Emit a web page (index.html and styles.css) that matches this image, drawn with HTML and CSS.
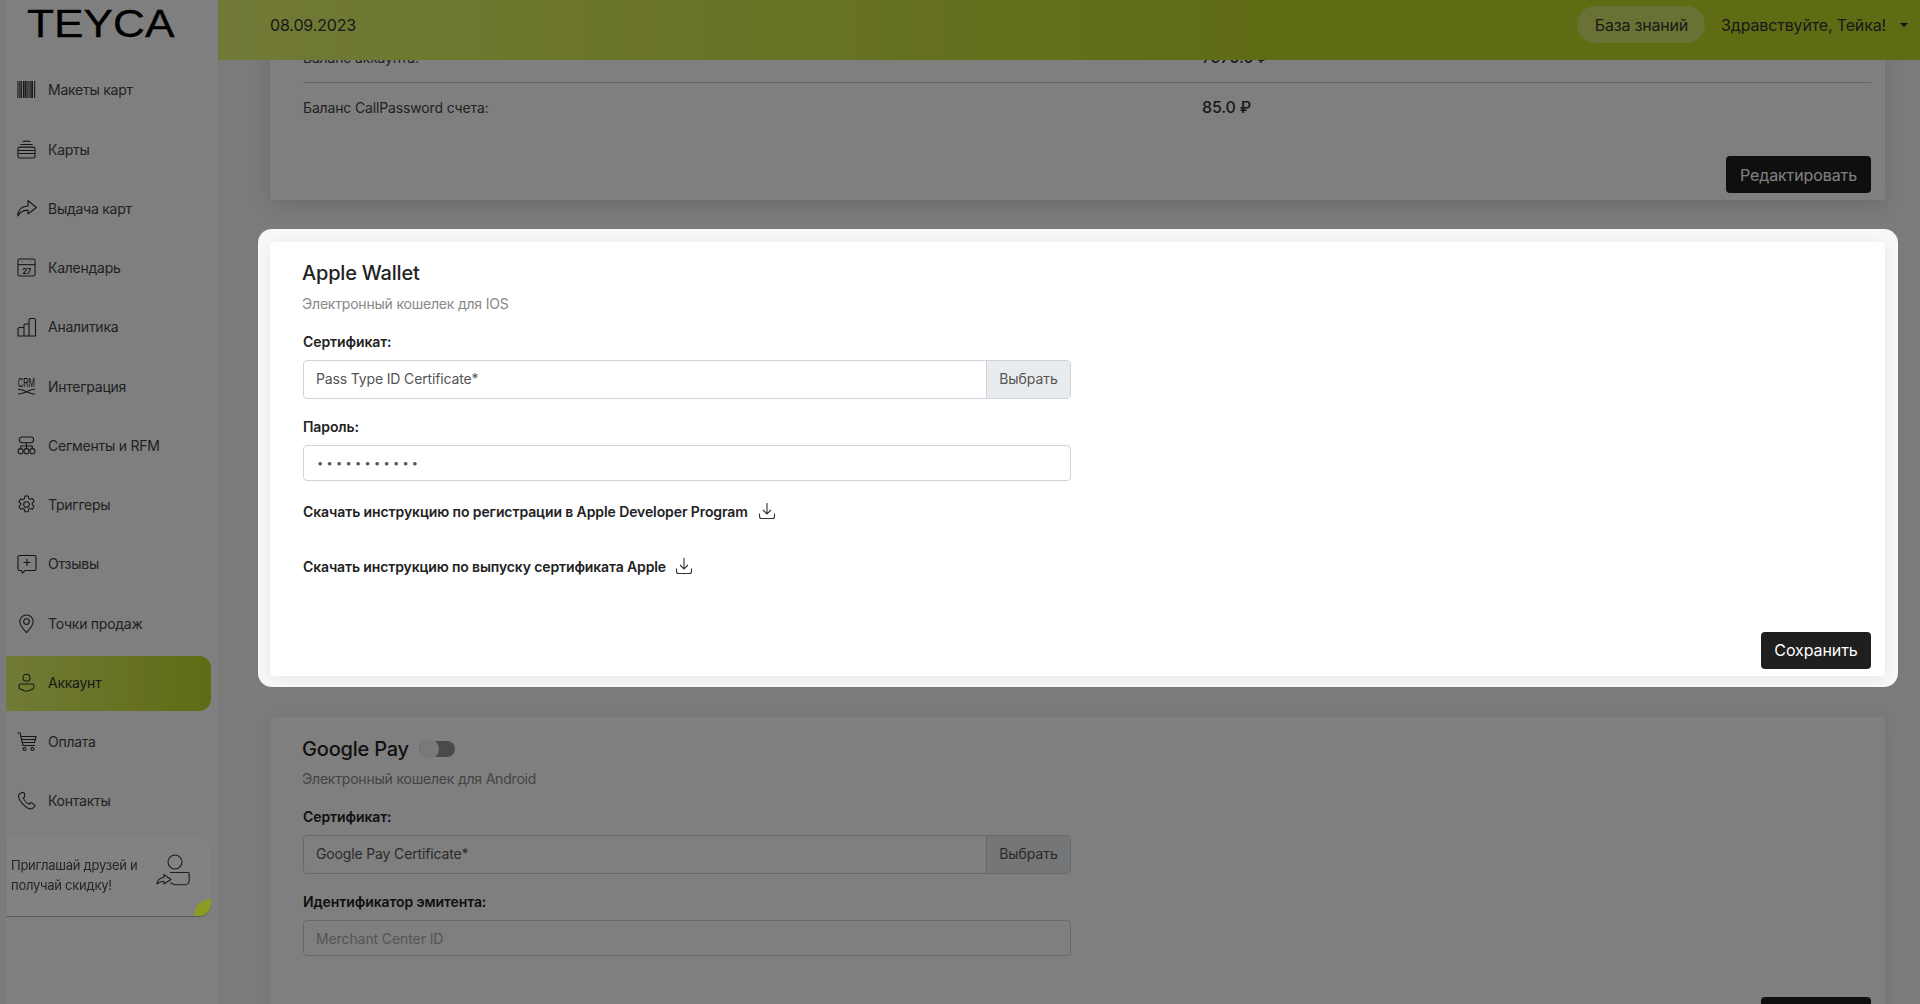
FILE: index.html
```html
<!DOCTYPE html>
<html lang="ru">
<head>
<meta charset="utf-8">
<title>Teyca — Аккаунт</title>
<link rel="stylesheet" href="styles.css">
</head>
<body>
<div class="app">
  <aside class="sidebar">
    <div class="logo"><span class="logo-text">TEYCA</span></div>
    <nav class="nav">
      <a class="nav-item"><svg class="ico" viewBox="0 0 20 20"><path d="M1 1v18M3 1v18M4.600 1v18M6.800 1v18M9 1v18M10.600 1v18M12.600 1v18M14.600 1v18M16.200 1v18M18.600 1v18" stroke-width="1.100"/><path d="M7.800 1v18M15.400 1v18" stroke-width=".6"/></svg>Макеты карт</a>
      <a class="nav-item"><svg class="ico" viewBox="0 0 20 20"><rect x="1" y="7.500" width="18" height="11.500" rx="2"/><path d="M1 11h18M1 14.200h18M3.500 4.800h13M6 1.800c1-.8 7-.8 8 0"/></svg>Карты</a>
      <a class="nav-item"><svg class="ico ico-wide" viewBox="0 0 20 20"><path d="M.8 18C.8 12 4 8.200 11 8V2.500l8.300 7-8.300 6.500v-3.600C6 12 3 14 .8 18z" stroke-linejoin="round"/></svg>Выдача карт</a>
      <a class="nav-item"><svg class="ico" viewBox="0 0 20 20"><rect x="1" y="1" width="18" height="18" rx="2"/><path d="M1 7h18"/><path d="M5.500 3.600v.6M14 3.600v.6"/><text class="cal-num" x="10" y="16.600" text-anchor="middle">27</text></svg>Календарь</a>
      <a class="nav-item"><svg class="ico ico-wide" viewBox="0 0 20 20"><path d="M1 19v-7a1.500 1.500 0 0 1 1.500-1.500H7V8.500A1.500 1.500 0 0 1 8.500 7H12V3a1.500 1.500 0 0 1 1.500-1.500h3.500A1.500 1.500 0 0 1 18.500 3v16zM7 10.500V19M12 7v12"/></svg>Аналитика</a>
      <a class="nav-item"><svg class="ico" viewBox="0 0 20 20"><text class="crm" transform="translate(.8 11) scale(.6 1)">CRM</text><path d="M1 13c6 0 12 5 18 5M19 13c-6 0-12 5-18 5"/></svg>Интеграция</a>
      <a class="nav-item"><svg class="ico" viewBox="0 0 20 20"><rect x="2.500" y="1" width="15" height="6" rx="3"/><path d="M10 7v6M4 13v-2.500h12V13"/><circle cx="3.800" cy="16" r="2.700"/><circle cx="10" cy="16" r="2.700"/><circle cx="16.200" cy="16" r="2.700"/></svg>Сегменты и RFM</a>
      <a class="nav-item"><svg class="ico" viewBox="0 0 20 20"><circle cx="10" cy="10" r="3"/><path d="M8.300 1h3.400l.6 2.600 1.500.9 2.500-.8 1.700 3-2 1.800v1.600l2 1.800-1.700 3-2.500-.8-1.500.9-.6 2.600H8.300l-.6-2.600-1.500-.9-2.500.8-1.700-3 2-1.800V8.900L2 7.100l1.700-3 2.500.8 1.500-.9z" stroke-linejoin="round"/></svg>Триггеры</a>
      <a class="nav-item"><svg class="ico ico-wide" viewBox="0 0 20 20"><path d="M2.500 1.500h15A1.500 1.500 0 0 1 19 3v12a1.500 1.500 0 0 1-1.500 1.500H8L5.500 19 4.500 16.500h-2A1.500 1.500 0 0 1 1 15V3a1.500 1.500 0 0 1 1.500-1.500z"/><path d="M10 5v7M6.500 8.500h7"/></svg>Отзывы</a>
      <a class="nav-item"><svg class="ico" viewBox="0 0 20 20"><path d="M10 19.500C6 15.500 3 12 3 8a7 7 0 0 1 14 0c0 4-3 7.500-7 11.500z"/><circle cx="10" cy="8" r="3"/></svg>Точки продаж</a>
      <a class="nav-item active"><svg class="ico" viewBox="0 0 20 20"><circle cx="10" cy="5" r="3.700"/><path d="M3.500 11.500h13c.8 0 1.300.5 1.300 1.300v2.500c0 .5-.2.900-.7 1.200L12 19H8l-5.100-2.500c-.5-.3-.7-.7-.7-1.200v-2.500c0-.8.500-1.300 1.300-1.300z"/></svg>Аккаунт</a>
      <a class="nav-item"><svg class="ico ico-wide" viewBox="0 0 20 20"><path d="M.5 1h2.500l3 12.500h12M3.800 4.500H19l-1.500 6H5.300M4.500 7.500h14"/><circle cx="7.500" cy="17" r="1.500"/><circle cx="15.500" cy="17" r="1.500"/></svg>Оплата</a>
      <a class="nav-item"><svg class="ico" viewBox="0 0 20 20"><path d="M5.500 1.500L2.500 3C1 5 2 9 5.500 13s8 6.500 10.500 5.500l2.500-2c.500-.5.500-1.200 0-1.700l-3-2.300c-.5-.4-1.200-.3-1.600.2l-.9 1.200c-2.500-.8-5.500-4-6.300-6.600l1.200-1c.5-.4.500-1.100.2-1.600L7.500 1.900c-.5-.6-1.300-.7-2-.4z"/></svg>Контакты</a>
    </nav>
    <div class="promo">
      <p class="promo-text">Приглашай друзей и получай скидку!</p>
      <svg class="promo-ico" viewBox="0 0 34 34"><circle cx="19" cy="8" r="7"/><path d="M14 18.500h18c.8 0 1.200.4 1.200 1.200v7c0 2-1.500 4-4 4H20c-1.500 0-4-1-5.500-2"/><path d="M.8 30c.7-4 3-6.200 7-6.500v-3l7.200 5-7.200 4.500v-2.800c-3 0-5 1-7 2.800z" stroke-linejoin="round"/></svg>
      <span class="promo-corner"></span>
    </div>
  </aside>
  <main class="main">
    <header class="topbar">
      <span class="date">08.09.2023</span>
      <div class="topbar-right">
        <a class="kb">База знаний</a>
        <a class="user">Здравствуйте, Тейка!<span class="caret"></span></a>
      </div>
    </header>
    <div class="content">
      <section class="card card-balance">
        <div class="row row-line"><span>Баланс аккаунта:</span><span class="val">7970.0 ₽</span></div>
        <div class="row row-last"><span>Баланс CallPassword счета:</span><span class="val">85.0 ₽</span></div>
        <div class="actions actions-balance"><button class="btn btn-wide">Редактировать</button></div>
      </section>
      <div class="spotlight">
        <section class="card card-form">
          <h2 class="title">Apple Wallet</h2>
          <p class="sub">Электронный кошелек для IOS</p>
          <label class="label">Сертификат:</label>
          <div class="file"><span class="file-name">Pass Type ID Certificate*</span><span class="file-btn">Выбрать</span></div>
          <label class="label label-2">Пароль:</label>
          <input class="input input-pass" type="password" value="12345678901" aria-label="Пароль">
          <a class="dl dl-1">Скачать инструкцию по регистрации в Apple Developer Program<svg class="dl-ico" viewBox="0 0 18 18"><path d="M9 1v10.500M5 8l4 4 4-4M1.500 11.500v3a2 2 0 0 0 2 2h11a2 2 0 0 0 2-2v-3"/></svg></a>
          <a class="dl dl-2">Скачать инструкцию по выпуску сертификата Apple<svg class="dl-ico" viewBox="0 0 18 18"><path d="M9 1v10.500M5 8l4 4 4-4M1.500 11.500v3a2 2 0 0 0 2 2h11a2 2 0 0 0 2-2v-3"/></svg></a>
          <div class="actions actions-form"><button class="btn btn-save">Сохранить</button></div>
        </section>
      </div>
      <section class="card card-form card-google">
        <h2 class="title">Google Pay<span class="toggle"><span class="knob"></span></span></h2>
        <p class="sub">Электронный кошелек для Android</p>
        <label class="label">Сертификат:</label>
        <div class="file"><span class="file-name">Google Pay Certificate*</span><span class="file-btn">Выбрать</span></div>
        <label class="label label-2">Идентификатор эмитента:</label>
        <input class="input" type="text" placeholder="Merchant Center ID" aria-label="Идентификатор эмитента">
        <div class="actions actions-google"><button class="btn btn-save">Сохранить</button></div>
      </section>
    </div>
  </main>
</div>
<div class="overlay"></div>
</body>
</html>
```
FILE: styles.css
```css
* { box-sizing: border-box; }
html, body { margin: 0; height: 100%; overflow: hidden; }
body {
  font-family: Inter, "Noto Sans", sans-serif;
  font-size: 14px;
  color: #222;
  background: #f6f6f6;
}
.app { display: flex; height: 1004px; padding-left: 6px; }

/* sidebar */
.sidebar { width: 212px; flex: none; background: #fff; display: flex; flex-direction: column; }
.logo { height: 63px; padding: 0 0 0 21px; }
.logo-text {
  display: inline-block;
  font-family: "Liberation Sans", sans-serif;
  font-size: 38px;
  line-height: 49px;
  color: #000;
  transform: scaleX(1.165);
  transform-origin: left center;
  -webkit-text-stroke: .3px #000;
}
.nav { display: flex; flex-direction: column; gap: 4.280px; width: 205px; }
.nav-item {
  height: 55px;
  display: flex;
  align-items: center;
  gap: 12px;
  padding: 0 0 1.500px 11px;
  font-size: 14px;
  letter-spacing: -.25px;
  color: #444;
}
.nav-item.active {
  background: linear-gradient(90deg, #e4f56e, #c0d828);
  border-radius: 0 12px 12px 0;
  color: #333;
}
.ico {
  width: 19px;
  height: 19px;
  flex: none;
  fill: none;
  stroke: #2a2a2a;
  stroke-width: 1.100;
}
.ico-wide { width: 20px; height: 20px; margin-left: -.5px; margin-right: -.5px; }
.cal-num { font: 700 8px Inter, sans-serif; fill: #333; stroke: none; }
.crm { font: 13.500px "Liberation Sans", sans-serif; fill: #222; stroke: none; }
.promo {
  position: relative;
  z-index: 20;
  margin-top: 7.500px;
  width: 205px;
  height: 79px;
  padding: 0 0 2px 5px;
  display: flex;
  align-items: center;
  justify-content: space-between;
  background: #828282;
  border-radius: 0 12px 12px 0;
  box-shadow: 0 1px 1px rgba(0,0,0,.3);
  overflow: hidden;
}
.promo-text { margin: 0; width: 132px; font-size: 13px; line-height: 20px; letter-spacing: -.25px; color: #262626; }
.promo-ico { width: 34px; height: 34px; margin-right: 21px; margin-top: -8px; fill: none; stroke: #1c1c1c; stroke-width: 1.100; }
.promo-corner {
  position: absolute;
  right: 0;
  bottom: 0;
  width: 17px;
  height: 17px;
  background: #8c9c22;
  border-radius: 17px 0 0 0;
}

/* main */
.main { flex: 1; min-width: 0; display: flex; flex-direction: column; height: 1004px; overflow: hidden; }
.topbar {
  position: relative;
  z-index: 5;
  flex: none;
  height: 60px;
  display: flex;
  align-items: center;
  justify-content: space-between;
  padding: 0 12px 11px 52px;
  background: linear-gradient(90deg, #e4f56e, #c0d828 62%);
  font-size: 16px;
  color: #333;
}
.date { letter-spacing: -.15px; }
.topbar-right { display: flex; align-items: center; }
.kb {
  height: 37px;
  padding: 0 17px 0 18px;
  display: flex;
  align-items: center;
  border-radius: 19px;
  letter-spacing: -.2px;
  background: rgba(255,255,255,.3);
}
.user { display: flex; align-items: center; margin-left: 16px; letter-spacing: -.15px; }
.caret {
  margin-left: 14px;
  border-top: 4px solid #222;
  border-left: 4px solid transparent;
  border-right: 4px solid transparent;
}
.content { flex: 1; padding: 0 35px 0 52px; display: flex; flex-direction: column; gap: 41.500px; }
.card {
  flex: none;
  background: #fff;
  border-radius: 4px;
  padding: 0 14px 0 33px;
  box-shadow: 0 2px 16px rgba(0,0,0,.07);
}
.card-balance { margin-top: -28px; height: 168px; box-shadow: 0 6px 22px rgba(0,0,0,.12); }
.row { height: 51px; display: grid; grid-template-columns: 899px 1fr; align-items: center; color: #444; letter-spacing: -.15px; }
.row-line { border-bottom: 1px solid #c9c9c9; }
.row-last { height: 48px; }
.val { font-size: 16px; font-weight: 500; color: #333; }
.actions { display: flex; justify-content: flex-end; }
.actions-balance { margin-top: 25px; }
.btn {
  height: 37px;
  border: 0;
  border-radius: 4px;
  background: #1f1f1f;
  color: #fff;
  font: 16px Inter, sans-serif;
  letter-spacing: -.1px;
}
.btn-wide { width: 145px; }
.btn-save { width: 110px; }

.spotlight {
  position: relative;
  z-index: 20;
  margin: -13px -13px -11px -12px;
  padding: 13px 13px 11px 12px;
  background: #f8f8f8;
  border-radius: 14px;
}
.card-form { padding-top: 19.500px; height: 434px; }
.title {
  margin: 0 0 0 -1px;
  display: flex;
  align-items: center;
  height: 24px;
  font-size: 20px;
  font-weight: 500;
  letter-spacing: -.2px;
  color: #222;
}
.sub { margin: 9.500px 0 0 -1px; height: 18px; line-height: 18px; font-size: 14px; letter-spacing: -.2px; color: #888; }
.label { display: block; margin-top: 20px; height: 18px; line-height: 18px; font-size: 14px; font-weight: 600; letter-spacing: -.1px; color: #222; }
.label-2 { margin-top: 19px; }
.file {
  margin-top: 9px;
  display: flex;
  height: 39px;
  width: 768px;
  border: 1px solid #ced4da;
  border-radius: 4px;
  overflow: hidden;
}
.file-name { flex: 1; padding: 0 12px; line-height: 35px; color: #555; letter-spacing: -.15px; }
.file-btn { width: 84px; padding-bottom: 2px; display: flex; align-items: center; justify-content: center; background: #e9ecef; border-left: 1px solid #ced4da; color: #555; letter-spacing: -.05px; }
.input {
  display: block;
  margin-top: 9px;
  width: 768px;
  height: 36px;
  padding: 0 12px;
  border: 1px solid #ced4da;
  border-radius: 4px;
  background: #fff;
  font: 14px Inter, sans-serif;
  color: #555;
  outline: 0;
}
.input-pass { font-size: 11px; letter-spacing: 3.300px; padding-left: 13px; }
.input::placeholder { color: #aaa; letter-spacing: -.1px; }
.dl { display: flex; align-items: center; font-weight: 600; font-size: 14px; letter-spacing: -.1px; color: #222; height: 20px; }
.dl-1 { margin-top: 20.500px; }
.dl-2 { margin-top: 35px; letter-spacing: -.13px; }
.dl-2 .dl-ico { margin-left: 9px; }
.dl-ico { width: 18px; height: 18px; margin-left: 10px; fill: none; stroke: #333; stroke-width: 1.100; }
.actions-form { margin-top: 55.500px; }
.card-google { height: 434px; }
.toggle { position: relative; margin-left: 10px; width: 36px; height: 16px; border-radius: 8px; background: #949494; }
.knob { position: absolute; left: 0; top: -2px; width: 20px; height: 20px; border-radius: 50%; background: #f3f3f3; }
.actions-google { margin-top: 41px; }

.overlay { position: fixed; inset: 0; z-index: 10; background: rgba(0,0,0,.5); }
```
